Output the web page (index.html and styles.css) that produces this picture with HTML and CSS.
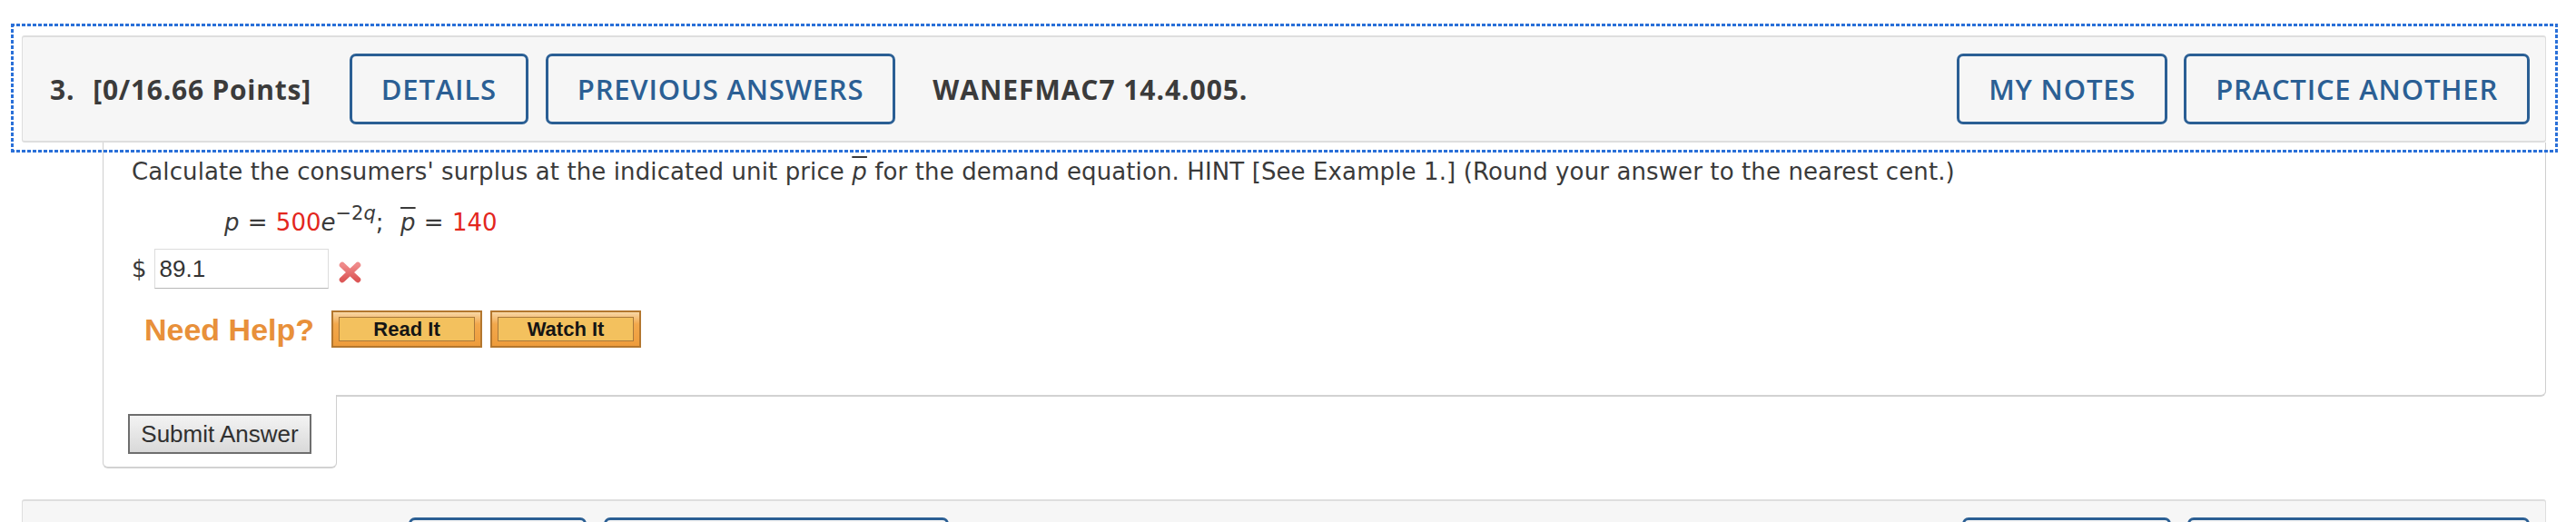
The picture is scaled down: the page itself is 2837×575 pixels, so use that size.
FILE: index.html
```html
<!DOCTYPE html>
<html lang="en">
<head>
<meta charset="utf-8">
<title>Question 3</title>
<link rel="stylesheet" href="styles.css">
</head>
<body>
<div class="question">
  <div class="q-header focused">
    <div class="q-left">
      <span class="q-num">3.</span>
      <span class="q-points">[0/16.66 Points]</span>
      <button class="hbtn">DETAILS</button>
      <button class="hbtn">PREVIOUS ANSWERS</button>
      <span class="q-code">WANEFMAC7 14.4.005.</span>
    </div>
    <div class="q-right">
      <button class="hbtn">MY NOTES</button>
      <button class="hbtn">PRACTICE ANOTHER</button>
    </div>
  </div>
  <div class="q-body">
    <p class="q-text">Calculate the consumers' surplus at the indicated unit price <i class="bar">p</i> for the demand equation. HINT [See Example 1.] (Round your answer to the nearest cent.)</p>
    <div class="eq"><i>p</i> = <span class="red">500</span><i>e</i><sup>−2<i>q</i></sup>;&nbsp; <i class="bar">p</i> = <span class="red">140</span></div>
    <div class="answer">
      <span class="dollar">$</span>
      <input class="ans-input" type="text" value="89.1">
      <svg class="wrong" viewBox="0 0 27 26" width="27" height="26" aria-label="incorrect">
        <defs>
          <linearGradient id="xg" x1="0" y1="0" x2="0" y2="1">
            <stop offset="0" stop-color="#ef8a8a"/>
            <stop offset="1" stop-color="#dc5757"/>
          </linearGradient>
        </defs>
        <path d="M5 5 L22 21 M22 5 L5 21" stroke="url(#xg)" stroke-width="6.5" stroke-linecap="round" fill="none"/>
      </svg>
    </div>
    <div class="help">
      <span class="need">Need Help?</span>
      <button class="hb"><span>Read It</span></button>
      <button class="hb"><span>Watch It</span></button>
    </div>
  </div>
  <div class="q-submit">
    <button class="submit">Submit Answer</button>
  </div>
</div>

<div class="question next">
  <div class="q-header stub">
    <div class="q-left">
      <div class="stub-label"></div>
      <button class="hbtn w-details" aria-label="Details"></button>
      <button class="hbtn w-prev" aria-label="Previous answers"></button>
    </div>
    <div class="q-right">
      <button class="hbtn w-notes" aria-label="My notes"></button>
      <button class="hbtn w-practice" aria-label="Practice another"></button>
    </div>
  </div>
</div>
</body>
</html>
```

FILE: styles.css
```css
html, body {
  margin: 0;
  padding: 0;
  background: #ffffff;
}

body {
  font-family: "DejaVu Sans", Verdana, sans-serif;
  color: #3a3a3a;
  overflow: hidden;
}

.question {
  margin: 39px 33px 0 24px;
  position: relative;
}

.question.next {
  margin-top: 34px;
}

.q-header {
  position: relative;
  display: flex;
  justify-content: space-between;
  align-items: center;
  background: #f6f6f6;
  border: 1px solid #dedede;
  border-top: 2px solid #dedede;
  border-bottom: 2px solid #dedede;
  border-radius: 3px;
  padding: 18px 17px 18px 30px;
  font-family: "Open Sans", "Liberation Sans", sans-serif;
}

.focused::before {
  content: "";
  position: absolute;
  top: -15px;
  left: -13px;
  right: -14px;
  bottom: -13px;
  pointer-events: none;
  background:
    repeating-linear-gradient(90deg, #2a70d8 0 4px, transparent 4px 6px) left top / 100% 3px no-repeat,
    repeating-linear-gradient(90deg, #2a70d8 0 4px, transparent 4px 6px) left bottom / 100% 3px no-repeat,
    repeating-linear-gradient(180deg, #2a70d8 0 4px, transparent 4px 6px) left top / 3px 100% no-repeat,
    repeating-linear-gradient(180deg, #2a70d8 0 4px, transparent 4px 6px) right top / 3px 100% no-repeat;
}

.q-left,
.q-right {
  display: flex;
  align-items: center;
}

.q-right {
  gap: 18px;
}

.q-num,
.q-points,
.q-code {
  font-weight: 700;
  font-size: 30px;
  letter-spacing: 0.75px;
  color: #3b3b3b;
}

.q-num {
  margin-right: 20px;
}

.q-points {
  margin-right: 42px;
}

.q-code {
  margin-left: 41px;
  letter-spacing: 0.95px;
}

.hbtn {
  height: 78px;
  box-sizing: border-box;
  border: 3px solid #2b5f94;
  border-radius: 7px;
  background: transparent;
  color: #2b5f94;
  font-family: "Open Sans", "Liberation Sans", sans-serif;
  font-weight: 600;
  font-size: 31px;
  letter-spacing: 0.8px;
  padding: 0 32px;
  margin: 0;
}

.q-left .hbtn + .hbtn {
  margin-left: 19px;
}

.stub-label {
  width: 395px;
  height: 78px;
}

.w-details { width: 196px; }
.w-prev { width: 380px; }
.w-notes { width: 230px; }
.w-practice { width: 377px; }

.q-body {
  margin-left: 89px;
  border: 1px solid #cfcfcf;
  border-top: none;
  border-bottom: 2px solid #d2d2d2;
  border-bottom-right-radius: 6px;
  padding: 14px 0 52px 31px;
  font-size: 26px;
  line-height: 36px;
}

.q-text {
  margin: 0;
  letter-spacing: 0.11px;
}

.bar {
  text-decoration: overline;
}

.eq {
  margin: 20px 0 0 102px;
  word-spacing: 1px;
}

.eq sup {
  font-size: 21px;
  line-height: 0;
  vertical-align: 12px;
  word-spacing: 0;
}

.red {
  color: #e3261d;
}

.answer {
  margin-top: 11px;
  display: flex;
  align-items: center;
}

.dollar {
  margin-right: 8px;
}

.ans-input {
  width: 192px;
  height: 44px;
  box-sizing: border-box;
  border: 1px solid #dcdcdc;
  border-bottom-color: #b8b8b8;
  padding: 0 5px;
  font-family: "Liberation Sans", Arial, sans-serif;
  font-size: 26px;
  color: #333333;
  margin: 0;
}

.wrong {
  margin-left: 10px;
  margin-top: 8px;
}

.help {
  margin-top: 24px;
  display: flex;
  align-items: center;
  padding-left: 14px;
}

.need {
  font-family: "Liberation Sans", Arial, sans-serif;
  font-weight: 700;
  font-size: 34px;
  color: #e8903a;
  margin-right: 19px;
}

.hb {
  width: 166px;
  height: 41px;
  box-sizing: border-box;
  border: 2px solid #b3772f;
  background: linear-gradient(#f8d7a6 0, #f2a84c 35%, #ee9c3c 100%);
  padding: 5px 6px;
  margin: 0 9px 0 0;
  display: flex;
}

.hb span {
  flex: 1;
  display: flex;
  align-items: center;
  justify-content: center;
  border: 1px solid #a8793c;
  background: #f3c15e;
  font-family: "Liberation Sans", Arial, sans-serif;
  font-weight: 700;
  font-size: 22px;
  color: #151515;
}

.q-submit {
  width: 258px;
  box-sizing: border-box;
  margin: -2px 0 0 89px;
  background: #ffffff;
  border: 1px solid #cfcfcf;
  border-top: none;
  border-bottom: 2px solid #d2d2d2;
  border-radius: 0 0 6px 6px;
  padding: 21px 0 14px 27px;
  position: relative;
}

.submit {
  width: 202px;
  height: 44px;
  box-sizing: border-box;
  border: 2px solid #6e6e6e;
  background: linear-gradient(#f3f3f3, #d9d9d9);
  font-family: "Liberation Sans", Arial, sans-serif;
  font-size: 26px;
  color: #303030;
  padding: 0;
  margin: 0;
  display: block;
}
```
